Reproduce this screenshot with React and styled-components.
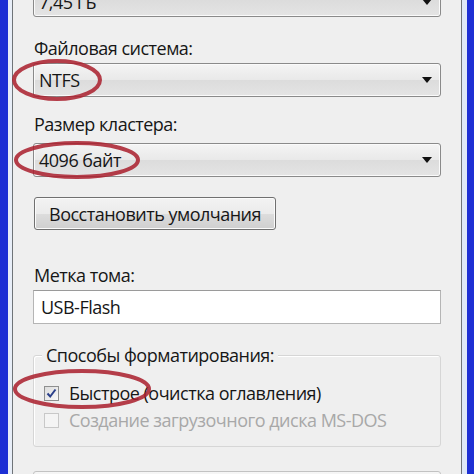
import React from "react"
import styled, { createGlobalStyle } from "styled-components"

const GlobalStyle = createGlobalStyle`
  html, body { margin: 0; padding: 0; background: #1d2fd4; }
  body { width: 474px; height: 474px; overflow: hidden; }
`

const Frame = styled.div`
  width: 474px;
  height: 474px;
  box-sizing: border-box;
  display: flex;
  background: #1d2fd4;
  padding: 0 7px 0 8px;
  overflow: hidden;
`

const Edge = styled.div`
  width: ${p => p.w}px;
  background: ${p => p.bg};
  border-${p => p.side}: 1px solid #6f7478;
`

const Panel = styled.div`
  flex: 1;
  background: #efefef;
  padding: 0 20px 0 20px;
  display: flex;
  flex-direction: column;
  font-family: "Open Sans", "DejaVu Sans", sans-serif;
  font-size: 18px;
  letter-spacing: -0.5px;
  color: #161616;
  overflow: hidden;
  margin-top: -17px;

  & > * { flex-shrink: 0; }
`

const Label = styled.div`
  margin: ${p => p.top}px 0 0 1px;
  line-height: 22px;
`

const Combo = styled.div`
  height: 34px;
  margin-top: ${p => p.top}px;
  box-sizing: border-box;
  border: 1px solid #8a8a8a;
  border-radius: 3px;
  background: linear-gradient(#f4f4f4, #e9e9e9 50%, #dcdcdc 51%, #e4e4e4);
  display: flex;
  align-items: center;
  padding: ${p => p.drop || 0}px 8px 0 5px;
  box-shadow: inset 0 0 0 1px #fafafa;
`

const ComboText = styled.span`
  flex: 1;
`

const Arrow = styled.span`
  width: 0;
  height: 0;
  border-left: 5px solid transparent;
  border-right: 5px solid transparent;
  border-top: 6px solid #111;
`

const Button = styled.div`
  align-self: flex-start;
  margin: 20px 0 0 1px;
  height: 33px;
  box-sizing: border-box;
  padding: 0 14px;
  border: 1px solid #707070;
  border-radius: 3px;
  background: linear-gradient(#f3f3f3, #ebebeb 50%, #dddddd 51%, #cfcfcf);
  box-shadow: inset 0 0 0 1px #fbfbfb;
  display: flex;
  align-items: center;
`

const Input = styled.div`
  margin-top: 4px;
  height: 34px;
  box-sizing: border-box;
  border: 1px solid #b5b5b5;
  border-top-color: #9a9a9a;
  background: #fff;
  display: flex;
  align-items: center;
  padding: 0 7px;
`

const Group = styled.div`
  margin-top: 31px;
  position: relative;
  border: 1px solid #d6d6d6;
  border-radius: 3px;
  box-shadow: inset 1px 1px 0 #fff;
  padding: 26px 10px 15px 10px;
  display: flex;
  flex-direction: column;
  gap: 5px;
`

const Legend = styled.div`
  position: absolute;
  top: -12px;
  left: 8px;
  padding: 0 4px;
  background: #efefef;
  line-height: 22px;
`

const CheckRow = styled.div`
  display: flex;
  align-items: center;
  gap: 10px;
  color: ${p => (p.disabled ? "#a8a8a8" : "#161616")};
  line-height: 22px;
`

const Box = styled.span`
  width: 15px;
  height: 15px;
  box-sizing: border-box;
  border: 1px solid ${p => (p.disabled ? "#c8c8c8" : "#8e8f8f")};
  background: ${p => (p.disabled ? "#f4f4f4" : "linear-gradient(135deg, #dcdcdc, #f8f8f8)")};
  display: flex;
  align-items: center;
  justify-content: center;
`

const BottomBar = styled.div`
  margin-top: 24px;
  height: 30px;
  border: 1px solid #c2c2c2;
  border-radius: 3px;
  background: linear-gradient(#f6f6f6, #e4e4e4);
`

const Marker = styled.svg`
  position: absolute;
  left: 0;
  top: 0;
  pointer-events: none;
`

const Check = () => (
  <svg width="11" height="11" viewBox="0 0 11 11">
    <path d="M1.5 5.5 L4.2 8.5 L9.5 1.5" fill="none" stroke="#2a3f8a" strokeWidth="2" />
  </svg>
)

export default function App() {
  return (
    <>
      <GlobalStyle />
      <Frame>
        <Edge w={4} bg="#e8eef8" side="right" />
        <Panel>
          <Combo top={0} drop={4}>
            <ComboText>7,45 ГБ</ComboText>
            <Arrow />
          </Combo>
          <Label top={20}>Файловая система:</Label>
          <Combo top={4}>
            <ComboText>NTFS</ComboText>
            <Arrow />
          </Combo>
          <Label top={16}>Размер кластера:</Label>
          <Combo top={8}>
            <ComboText>4096 байт</ComboText>
            <Arrow />
          </Combo>
          <Button>Восстановить умолчания</Button>
          <Label top={34}>Метка тома:</Label>
          <Input>USB-Flash</Input>
          <Group>
            <Legend>Способы форматирования:</Legend>
            <CheckRow>
              <Box><Check /></Box>
              Быстрое (очистка оглавления)
            </CheckRow>
            <CheckRow disabled>
              <Box disabled />
              Создание загрузочного диска MS-DOS
            </CheckRow>
          </Group>
          <BottomBar />
        </Panel>
        <Edge w={5} bg="#dfe8f7" side="left" />
      </Frame>
      <Marker width="474" height="474">
        <g fill="none" stroke="#aa1f2d" strokeWidth="4" opacity="0.85">
          <ellipse cx="57" cy="80" rx="43" ry="19" />
          <ellipse cx="77" cy="160" rx="61" ry="17" />
          <ellipse cx="82" cy="389" rx="67" ry="18" />
        </g>
      </Marker>
    </>
  )
}
